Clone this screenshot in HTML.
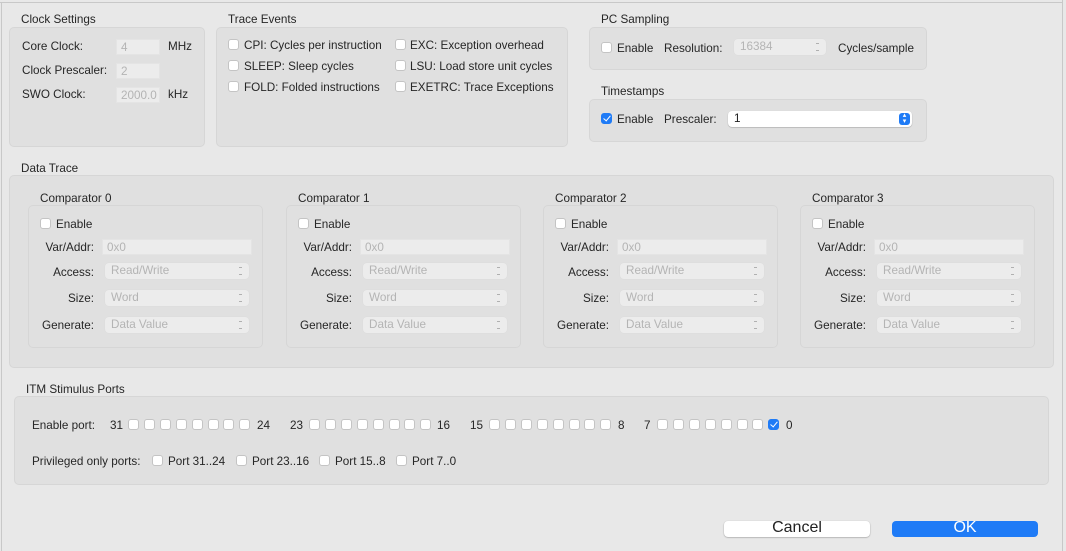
<!DOCTYPE html>
<html><head><meta charset="utf-8"><style>
*{box-sizing:border-box;margin:0;padding:0}
body{width:1066px;height:551px;background:#e8e8e8;font-family:"Liberation Sans",sans-serif;font-size:11.7px;color:#262626;position:relative;overflow:hidden}
.a{position:absolute;white-space:nowrap;line-height:15px}
.box{position:absolute;background:#e0e0e0;border:1px solid #d6d6d6;border-radius:5px}
.cb{position:absolute;width:11px;height:11px;margin-top:1px;background:#fff;border:1px solid #c4c4c4;border-radius:3px}
.cb.on{background:#1f7bf6;border-color:#1f7bf6}
.cb.on:after{content:"";position:absolute;left:3px;top:0px;width:3px;height:6px;border:solid #fff;border-width:0 1.6px 1.6px 0;transform:rotate(40deg)}
.in{position:absolute;background:#ececec;border:1px solid #e4e4e4;color:#b4b4b4;padding-left:4px;line-height:15px;font-size:11.7px}
.pop{position:absolute;background:#ececec;border-radius:4px;color:#b4b4b4;padding-left:6px;line-height:16px;height:16px;box-shadow:0 0 0 0.5px #dcdcdc}
.pop:after{content:"";position:absolute;right:7px;top:4px;width:3px;height:8px;background:
linear-gradient(#b0b0b0,#b0b0b0) 0 0/3px 1px no-repeat,linear-gradient(#b0b0b0,#b0b0b0) 0 7px/3px 1px no-repeat}
.r{text-align:right}
</style></head><body>
<div style="position:absolute;left:0;top:2px;width:1063px;height:1px;background:#c8c8c8"></div>
<div style="position:absolute;left:1px;top:2px;width:1px;height:549px;background:#c8c8c8"></div>
<div style="position:absolute;left:1062px;top:0;width:1px;height:551px;background:#c8c8c8"></div>

<div class="a" style="left:21px;top:12px">Clock Settings</div>
<div class="box" style="left:9px;top:27px;width:196px;height:120px"></div>
<div class="a" style="left:22px;top:39px">Core Clock:</div>
<div class="in" style="left:116px;top:39px;width:44px;height:16px">4</div>
<div class="a" style="left:168px;top:39px">MHz</div>
<div class="a" style="left:22px;top:63px">Clock Prescaler:</div>
<div class="in" style="left:116px;top:63px;width:44px;height:16px">2</div>
<div class="a" style="left:22px;top:87px">SWO Clock:</div>
<div class="in" style="left:116px;top:87px;width:44px;height:16px">2000.0</div>
<div class="a" style="left:168px;top:87px">kHz</div>

<div class="a" style="left:228px;top:12px">Trace Events</div>
<div class="box" style="left:216px;top:27px;width:352px;height:120px"></div>
<div class="cb" style="left:228px;top:38px"></div><div class="a" style="left:244px;top:38px">CPI: Cycles per instruction</div>
<div class="cb" style="left:395px;top:38px"></div><div class="a" style="left:410px;top:38px">EXC: Exception overhead</div>
<div class="cb" style="left:228px;top:59px"></div><div class="a" style="left:244px;top:59px">SLEEP: Sleep cycles</div>
<div class="cb" style="left:395px;top:59px"></div><div class="a" style="left:410px;top:59px">LSU: Load store unit cycles</div>
<div class="cb" style="left:228px;top:80px"></div><div class="a" style="left:244px;top:80px">FOLD: Folded instructions</div>
<div class="cb" style="left:395px;top:80px"></div><div class="a" style="left:410px;top:80px">EXETRC: Trace Exceptions</div>

<div class="a" style="left:601px;top:12px">PC Sampling</div>
<div class="box" style="left:589px;top:27px;width:338px;height:43px"></div>
<div class="cb" style="left:601px;top:41px"></div><div class="a" style="left:617px;top:41px">Enable</div>
<div class="a" style="left:664px;top:41px">Resolution:</div>
<div class="pop" style="left:734px;top:39px;width:92px">16384</div>
<div class="a" style="left:838px;top:41px">Cycles/sample</div>

<div class="a" style="left:601px;top:84px">Timestamps</div>
<div class="box" style="left:589px;top:99px;width:338px;height:43px"></div>
<div class="cb on" style="left:601px;top:112px"></div><div class="a" style="left:617px;top:112px">Enable</div>
<div class="a" style="left:664px;top:112px">Prescaler:</div>
<div style="position:absolute;left:728px;top:111px;width:184px;height:16px;background:#fff;border-radius:4px;box-shadow:0 0.5px 1px rgba(0,0,0,.3);color:#222;padding-left:6px;line-height:16px">1<div style="position:absolute;right:2px;top:2px;width:11px;height:12px;background:#1f7bf6;border-radius:3px;color:#fff;font-size:7px;line-height:6px;text-align:center">▴<br>▾</div></div>

<div class="a" style="left:21px;top:161px">Data Trace</div>
<div class="box" style="left:9px;top:175px;width:1045px;height:193px"></div>

<div id="comps"></div>

<div class="a" style="left:26px;top:382px">ITM Stimulus Ports</div>
<div class="box" style="left:14px;top:396px;width:1035px;height:89px"></div>
<div class="a" style="left:32px;top:418px">Enable port:</div>
<div id="ports"></div>
<div class="a" style="left:32px;top:454px">Privileged only ports:</div>
<div class="cb" style="left:152px;top:454px"></div><div class="a" style="left:168px;top:454px">Port 31..24</div>
<div class="cb" style="left:236px;top:454px"></div><div class="a" style="left:252px;top:454px">Port 23..16</div>
<div class="cb" style="left:319px;top:454px"></div><div class="a" style="left:335px;top:454px">Port 15..8</div>
<div class="cb" style="left:396px;top:454px"></div><div class="a" style="left:412px;top:454px">Port 7..0</div>

<div style="position:absolute;left:724px;top:521px;width:146px;height:16px;background:#fff;border-radius:4px;box-shadow:0 0.5px 1.5px rgba(0,0,0,.35);font-size:16px;line-height:13px;text-align:center;color:#222;overflow:hidden">Cancel</div>
<div style="position:absolute;left:892px;top:521px;width:146px;height:16px;background:#1f7bf6;border-radius:4px;font-size:16px;line-height:13px;text-align:center;color:#fff;overflow:hidden">OK</div>

<script>
var c='';
[28,286,543,800].forEach(function(x,i){
c+='<div class="a" style="left:'+(x+12)+'px;top:191px">Comparator '+i+'</div>';
c+='<div class="box" style="left:'+x+'px;top:205px;width:235px;height:143px"></div>';
c+='<div class="cb" style="left:'+(x+12)+'px;top:217px"></div><div class="a" style="left:'+(x+28)+'px;top:217px">Enable</div>';
var lab=[['Var/Addr:',240],['Access:',265],['Size:',291],['Generate:',318]];
lab.forEach(function(l,j){c+='<div class="a r" style="left:'+(x)+'px;width:66px;top:'+l[1]+'px">'+l[0]+'</div>';});
c+='<div class="in" style="left:'+(x+74)+'px;top:239px;width:150px;height:16px">0x0</div>';
c+='<div class="pop" style="left:'+(x+77)+'px;top:263px;width:144px">Read/Write</div>';
c+='<div class="pop" style="left:'+(x+77)+'px;top:290px;width:144px">Word</div>';
c+='<div class="pop" style="left:'+(x+77)+'px;top:317px;width:144px">Data Value</div>';
});
document.getElementById('comps').innerHTML=c;
var p='';
[[110,'31',128,257,'24'],[290,'23',309,437,'16'],[470,'15',489,618,'8'],[644,'7',657,786,'0']].forEach(function(g,gi){
p+='<div class="a" style="left:'+g[0]+'px;top:418px">'+g[1]+'</div>';
for(var k=0;k<8;k++){p+='<div class="cb'+(gi==3&&k==7?' on':'')+'" style="left:'+(g[2]+k*15.9)+'px;top:418px"></div>';}
p+='<div class="a" style="left:'+g[3]+'px;top:418px">'+g[4]+'</div>';
});
document.getElementById('ports').innerHTML=p;
</script>
</body></html>
